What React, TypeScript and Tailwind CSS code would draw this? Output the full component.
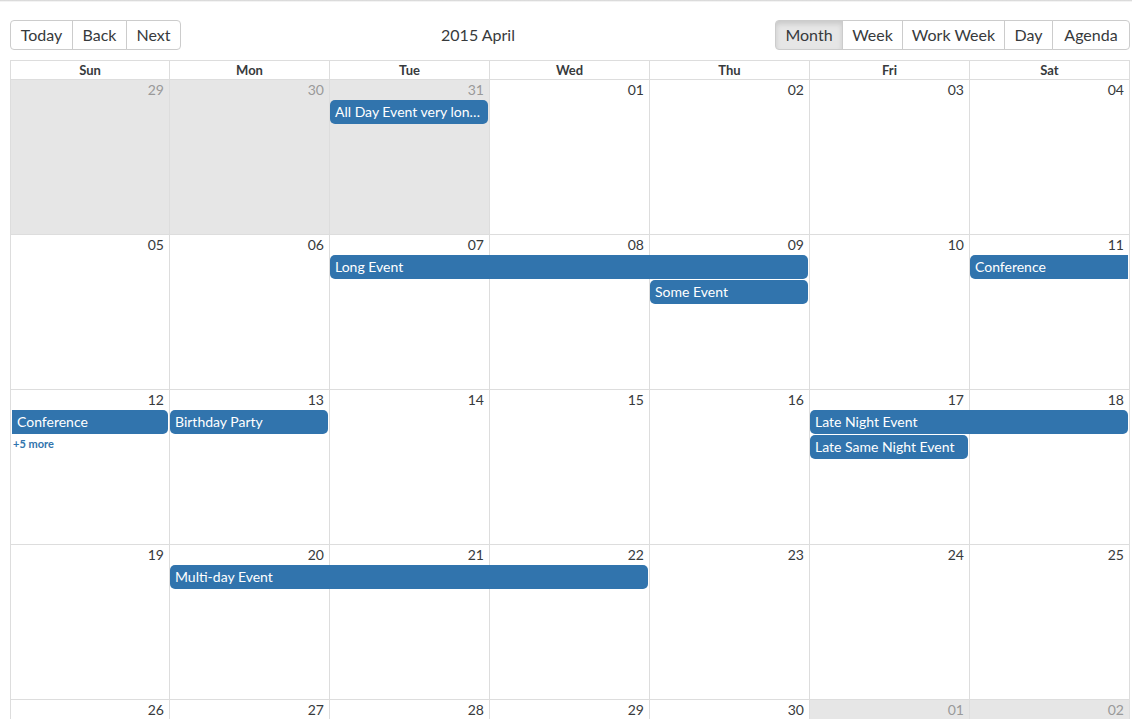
import React from "react";

type Ev = { title: string; col: number; span: number; row: number; roundL?: boolean; roundR?: boolean };
type Week = { days: { n: string; off?: boolean }[]; events: Ev[]; more?: { col: number; row: number; text: string } };

const weeks: Week[] = [
  {
    days: [{ n: "29", off: true }, { n: "30", off: true }, { n: "31", off: true }, { n: "01" }, { n: "02" }, { n: "03" }, { n: "04" }],
    events: [{ title: "All Day Event very long title", col: 3, span: 1, row: 2 }],
  },
  {
    days: [{ n: "05" }, { n: "06" }, { n: "07" }, { n: "08" }, { n: "09" }, { n: "10" }, { n: "11" }],
    events: [
      { title: "Long Event", col: 3, span: 3, row: 2 },
      { title: "Some Event", col: 5, span: 1, row: 3 },
      { title: "Conference", col: 7, span: 1, row: 2, roundR: false },
    ],
  },
  {
    days: [{ n: "12" }, { n: "13" }, { n: "14" }, { n: "15" }, { n: "16" }, { n: "17" }, { n: "18" }],
    events: [
      { title: "Conference", col: 1, span: 1, row: 2, roundL: false },
      { title: "Birthday Party", col: 2, span: 1, row: 2 },
      { title: "Late Night Event", col: 6, span: 2, row: 2 },
      { title: "Late Same Night Event", col: 6, span: 1, row: 3 },
    ],
    more: { col: 1, row: 3, text: "+5 more" },
  },
  {
    days: [{ n: "19" }, { n: "20" }, { n: "21" }, { n: "22" }, { n: "23" }, { n: "24" }, { n: "25" }],
    events: [{ title: "Multi-day Event", col: 2, span: 3, row: 2 }],
  },
  {
    days: [{ n: "26" }, { n: "27" }, { n: "28" }, { n: "29" }, { n: "30" }, { n: "01", off: true }, { n: "02", off: true }],
    events: [],
  },
];

const colStart = ["", "col-start-1", "col-start-2", "col-start-3", "col-start-4", "col-start-5", "col-start-6", "col-start-7"];
const colSpan = ["", "col-span-1", "col-span-2", "col-span-3", "col-span-4", "col-span-5", "col-span-6", "col-span-7"];
const rowStart = ["", "row-start-1", "row-start-2", "row-start-3", "row-start-4"];

const cols = "grid grid-cols-[158px_160px_160px_160px_160px_160px_1fr]";

function Btn({ label, w, first, last, active }: { label: string; w: string; first?: boolean; last?: boolean; active?: boolean }) {
  return (
    <button
      className={
        w +
        " h-[30px] border border-[#ccc] text-[16px] text-[#373a3c] leading-none " +
        (first ? "rounded-l-[4px] " : "-ml-px ") +
        (last ? "rounded-r-[4px] " : "") +
        (active ? "bg-[#e6e6e6] shadow-[inset_0_3px_5px_rgba(0,0,0,0.125)] border-[#adadad]" : "bg-white")
      }
    >
      {label}
    </button>
  );
}

export default function App() {
  const font = { fontFamily: 'Lato, "Noto Sans", sans-serif' };
  return (
    <div className="relative w-[1132px] h-[719px] overflow-hidden bg-white" style={font}>
      <div className="h-[2px] bg-gradient-to-b from-[#cfcfcf] to-white" />
      <div className="ml-[10px] w-[1120px] pt-[18px]">
        <div className="flex items-center justify-between mb-[10px]">
          <div className="flex">
            <Btn label="Today" w="w-[63px]" first />
            <Btn label="Back" w="w-[55px]" />
            <Btn label="Next" w="w-[55px]" last />
          </div>
          <div className="flex-1 text-center text-[16px] text-[#373a3c]">2015 April</div>
          <div className="flex">
            <Btn label="Month" w="w-[68px]" first active />
            <Btn label="Week" w="w-[61px]" />
            <Btn label="Work Week" w="w-[103px]" />
            <Btn label="Day" w="w-[49px]" />
            <Btn label="Agenda" w="w-[78px]" last />
          </div>
        </div>
        <div className="border border-[#ddd]">
          <div className={cols + " h-[19px]"}>
            {["Sun", "Mon", "Tue", "Wed", "Thu", "Fri", "Sat"].map((d, i) => (
              <div
                key={d}
                className={"text-center text-[13px] font-bold text-[#373a3c] leading-[18px] border-b border-[#ddd] " + (i > 0 ? "border-l" : "")}
              >
                {d}
              </div>
            ))}
          </div>
          {weeks.map((w, wi) => (
            <div key={wi} className={cols + " grid-rows-[20px_25px_25px_1fr] h-[155px] border-b border-[#ddd]"}>
              {w.days.map((d, di) => (
                <div
                  key={"bg" + di}
                  className={
                    colStart[di + 1] +
                    " row-start-1 row-end-5 " +
                    (di > 0 ? "border-l border-[#ddd] " : "") +
                    (d.off ? "bg-[#e6e6e6]" : "bg-white")
                  }
                />
              ))}
              {w.days.map((d, di) => (
                <div
                  key={"n" + di}
                  className={
                    colStart[di + 1] +
                    " row-start-1 text-right pr-[5px] text-[14px] leading-[19px] z-10 " +
                    (d.off ? "text-[#999]" : "text-[#373a3c]")
                  }
                >
                  {d.n}
                </div>
              ))}
              {w.events.map((e, ei) => (
                <div
                  key={"e" + ei}
                  className={colStart[e.col] + " " + colSpan[e.span] + " " + rowStart[e.row] + " z-10 pl-[1px] pr-[1px] min-w-0"}
                >
                  <div
                    className={
                      "h-[24px] bg-[#3174ad] text-white text-[14px] leading-[20px] px-[5px] py-[2px] truncate " +
                      (e.roundL === false ? "" : "rounded-l-[5px] ") +
                      (e.roundR === false ? "" : "rounded-r-[5px]")
                    }
                  >
                    {e.title}
                  </div>
                </div>
              ))}
              {w.more && (
                <div className={colStart[w.more.col] + " " + rowStart[w.more.row] + " z-10 pl-[2px] text-[11px] font-bold text-[#3174ad] leading-[18px]"}>
                  {w.more.text}
                </div>
              )}
            </div>
          ))}
        </div>
      </div>
    </div>
  );
}
